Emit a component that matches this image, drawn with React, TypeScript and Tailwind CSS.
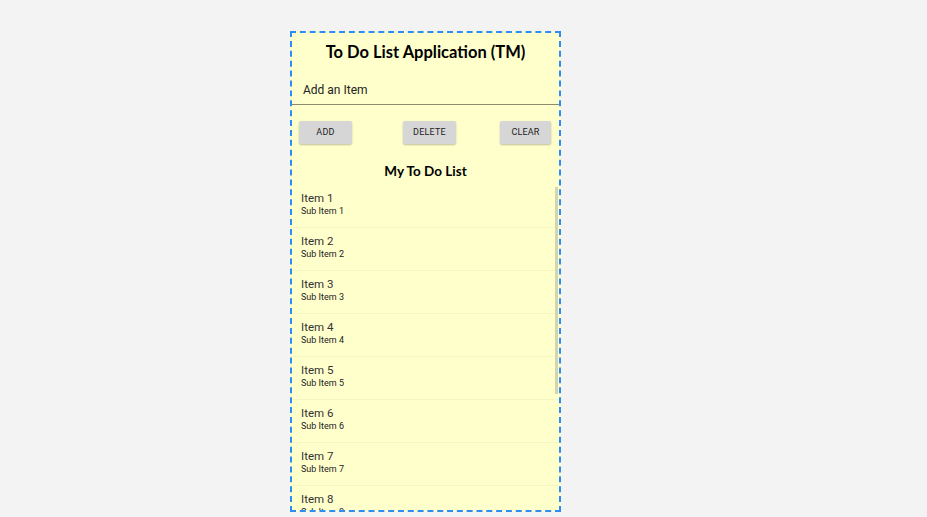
import React from 'react'

const items = Array.from({ length: 8 }, (_, i) => i + 1)

const Btn: React.FC<{ label: string; className?: string }> = ({ label, className }) => (
  <button
    className={`h-[23px] rounded-[2px] bg-[#d6d6d6] text-[9px] font-normal tracking-[0.2px] text-[#222] shadow-[0_1px_2px_rgba(0,0,0,0.25)] ${className ?? ''}`}
  >
    {label}
  </button>
)

export default function App() {
  return (
    <div className="h-[517px] w-full overflow-hidden bg-[#f3f3f3] font-['Roboto',sans-serif]">
      <div className="ml-[290px] mt-[31px] flex h-[481px] w-[271px] flex-col overflow-hidden border-2 border-dashed border-[#2e8cf5] bg-[#ffffcc]">
        <h1 className="pt-[8px] text-center font-['Lato',sans-serif] text-[16.5px] font-bold leading-[22px] text-black">
          To Do List Application (TM)
        </h1>
        <div className="mt-[19px] border-b border-[#8c8c6c] pb-[6px] pl-[11px] text-[12px] leading-[16px] text-[#222]">
          Add an Item
        </div>
        <div className="mt-[16px] flex items-center pl-[7px]">
          <Btn label="ADD" className="w-[53px]" />
          <Btn label="DELETE" className="ml-[51px] w-[53px]" />
          <Btn label="CLEAR" className="ml-[44px] w-[51px]" />
        </div>
        <h2 className="mt-[18px] text-center font-['Lato',sans-serif] text-[13.5px] font-bold leading-[18px] text-black">
          My To Do List
        </h2>
        <div className="relative mt-[5px] flex-1 overflow-hidden">
          <div className="absolute right-[1px] top-[2px] h-[207px] w-[3px] bg-[#d4d4b0]" />
          {items.map((n) => (
            <div key={n} className="h-[43px] border-b border-[#f6f6c4] pl-[9px] pt-[6px]">
              <div className="text-[11.5px] leading-[14px] text-[#333]">Item {n}</div>
              <div className="text-[9px] leading-[13px] text-[#222]">Sub Item {n}</div>
            </div>
          ))}
        </div>
      </div>
    </div>
  )
}
